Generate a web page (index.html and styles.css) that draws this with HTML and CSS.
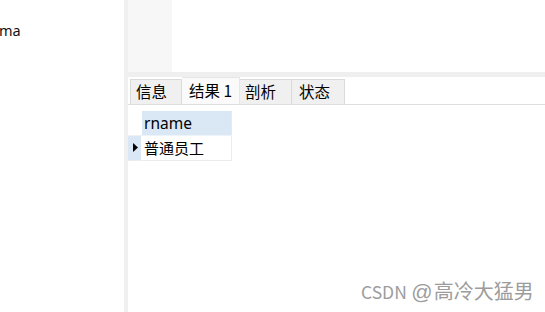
FILE: index.html
```html
<!DOCTYPE html>
<html lang="zh">
<head>
<meta charset="utf-8">
<link rel="stylesheet" href="styles.css">
</head>
<body>
<div class="app">
  <aside class="side">
    <div class="side-item">ma</div>
  </aside>
  <div class="vsplit"></div>
  <main class="main">
    <div class="editor">
      <div class="gutter"></div>
      <div class="code"></div>
    </div>
    <div class="hsplit"></div>
    <div class="tabs">
      <div class="tab">信息</div>
      <div class="tab active">结果 1</div>
      <div class="tab">剖析</div>
      <div class="tab last">状态</div>
    </div>
    <div class="results">
      <div class="grid">
        <div class="ind"></div>
        <div class="hcell">rname</div>
        <div class="ind cur"><svg class="tri" width="5" height="9" viewBox="0 0 5 9"><path d="M0 0 L5 4.5 L0 9 Z" fill="#000"/></svg></div>
        <div class="cell">普通员工</div>
      </div>
    </div>
  </main>
  <div class="watermark"><span class="wm-latin">CSDN</span> <span class="wm-at">@</span>高冷大猛男</div>
</div>
</body>
</html>
```

FILE: styles.css
```css
* { box-sizing: border-box; }
html, body { margin: 0; padding: 0; background: #fff; }
body {
  font-family: "Noto Sans", "Noto Sans CJK SC", sans-serif;
  font-size: 15px;
  color: #000;
}
.app {
  position: relative;
  width: 545px;
  height: 312px;
  display: flex;
  overflow: hidden;
}
.side {
  width: 124px;
  flex: none;
  background: #fff;
}
.side-item {
  margin-top: 20px;
  margin-left: -1px;
  line-height: 20px;
  font-size: 14.5px;
  color: #111;
}
.vsplit {
  width: 4px;
  flex: none;
  background: #f0f0f0;
}
.main {
  flex: 1;
  display: flex;
  flex-direction: column;
}
.editor {
  height: 72px;
  display: flex;
  flex: none;
}
.gutter {
  width: 44px;
  background: #f7f7f7;
}
.code { flex: 1; background: #fff; }
.hsplit {
  height: 5px;
  flex: none;
  background: #efefef;
}
.tabs {
  height: 28px;
  flex: none;
  display: flex;
  align-items: flex-end;
  padding-left: 2px;
  border-bottom: 1px solid #dedede;
}
.tab {
  height: 25px;
  width: 52px;
  padding-left: 5px;
  background: #f0f0f0;
  border: 1px solid #dadada;
  border-bottom: none;
  line-height: 23px;
  font-family: "Noto Sans CJK SC", sans-serif;
  font-size: 15.5px;
  white-space: nowrap;
}
.tab + .tab { border-left: none; }
.tab.active {
  height: 27px;
  width: 58px;
  padding-left: 7px;
  background: #fafafa;
  border-color: #e6e6e6;
  line-height: 25px;
}
.tab.last { width: 53px; padding-left: 7px; }
.results {
  flex: 1;
  background: #fff;
  padding-top: 6px;
}
.grid {
  display: grid;
  grid-template-columns: 14px 90px;
  grid-template-rows: 25px 25px;
}
.ind {
  background: #fff;
  border-bottom: 1px solid #f0f0f0;
}
.ind.cur {
  background: #dae8f6;
  border-right: 1px solid #fff;
  border-bottom: 1px solid #ececec;
  display: flex;
  align-items: center;
  padding-left: 5px;
}
.tri { display: block; margin-top: -1px; }
.hcell {
  background: #dae8f6;
  border-right: 1px solid #e2ebf4;
  border-bottom: 1px solid #eef3f9;
  padding-left: 2px;
  line-height: 24px;
  font-size: 15.5px;
}
.cell {
  background: #fff;
  border-right: 1px solid #ececec;
  border-bottom: 1px solid #ececec;
  padding-left: 2px;
  line-height: 24px;
  font-family: "Noto Sans CJK SC", sans-serif;
  font-size: 15px;
}
.watermark {
  position: absolute;
  left: 361px;
  top: 279px;
  font-family: "Noto Sans CJK SC", sans-serif;
  font-size: 20px;
  line-height: 24px;
  color: #9c9c9c;
  white-space: nowrap;
}
.wm-latin {
  font-size: 17.5px;
}
.wm-at {
  font-family: "Liberation Sans", sans-serif;
  font-size: 21px;
  margin-right: 1px;
}
```
